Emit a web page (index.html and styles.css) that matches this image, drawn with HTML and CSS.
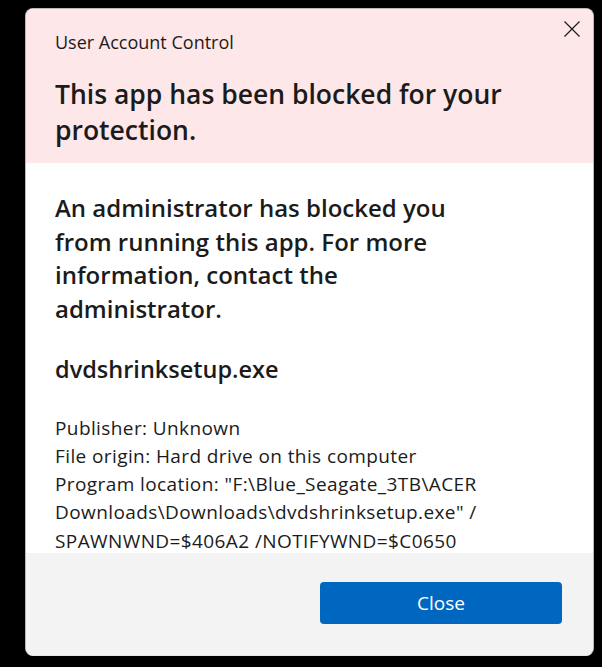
FILE: index.html
```html
<!DOCTYPE html>
<html lang="en">
<head>
<meta charset="utf-8">
<title>User Account Control</title>
<link rel="stylesheet" href="styles.css">
</head>
<body>
<div class="dialog">
  <button class="close-x" aria-label="Close">
    <svg width="16" height="16" viewBox="0 0 16 16"><path d="M0.5 0.5 L15.5 15.5 M15.5 0.5 L0.5 15.5" stroke="#1a1a1a" stroke-width="1.2" fill="none"/></svg>
  </button>
  <div class="header">
    <div class="label">User Account Control</div>
    <div class="title">This app has been blocked for your<br>protection.</div>
  </div>
  <div class="content">
    <div class="message">An administrator has blocked you<br>from running this app. For more<br>information, contact the<br>administrator.</div>
    <div class="filename">dvdshrinksetup.exe</div>
    <div class="details">
      <div>Publisher: Unknown</div>
      <div>File origin: Hard drive on this computer</div>
      <div>Program location: "F:\Blue_Seagate_3TB\ACER<br>Downloads\Downloads\dvdshrinksetup.exe" /<br>SPAWNWND=$406A2 /NOTIFYWND=$C0650</div>
    </div>
  </div>
  <div class="footer">
    <button class="btn-close">Close</button>
  </div>
</div>
</body>
</html>
```
FILE: styles.css
```css
html, body {
  margin: 0;
  background: #000;
}
body {
  padding: 8px 0 0 25px;
  font-family: "Open Sans", "Noto Sans", sans-serif;
  color: #1b1b1b;
}
.dialog {
  position: relative;
  width: 569px;
  height: 648px;
  box-sizing: border-box;
  border: 1px solid #b9b9b9;
  border-bottom-color: #e8e8e8;
  border-radius: 8px;
  overflow: hidden;
  display: flex;
  flex-direction: column;
  background: #fff;
}
.close-x {
  position: absolute;
  top: 12px;
  right: 13px;
  width: 16px;
  height: 16px;
  padding: 0;
  border: 0;
  background: transparent;
  display: flex;
}
.header {
  background: #fde7e9;
  height: 154px;
  box-sizing: border-box;
  padding: 21px 29px 0 29px;
}
.label {
  font-size: 18px;
  line-height: 24px;
}
.title {
  margin-top: 22px;
  font-size: 26.5px;
  line-height: 36px;
  font-weight: 600;
  white-space: nowrap;
}
.content {
  height: 390px;
  box-sizing: border-box;
  padding: 28px 29px 0 29px;
  overflow: hidden;
  white-space: nowrap;
}
.message {
  font-size: 24px;
  line-height: 33.7px;
  font-weight: 600;
}
.filename {
  margin-top: 26px;
  font-size: 23.5px;
  line-height: 34px;
  font-weight: 600;
}
.details {
  margin-top: 28px;
  font-size: 19px;
  line-height: 28.2px;
  letter-spacing: 0.4px;
}
.footer {
  flex: 1;
  background: #f3f3f3;
  display: flex;
  justify-content: flex-end;
  align-items: flex-start;
  padding: 29px 31px 0 0;
}
.btn-close {
  width: 242px;
  height: 42px;
  border: 0;
  border-radius: 4px;
  background: #0067c0;
  color: #fff;
  font-family: "Open Sans", "Noto Sans", sans-serif;
  font-size: 19px;
  padding: 0;
}
```
